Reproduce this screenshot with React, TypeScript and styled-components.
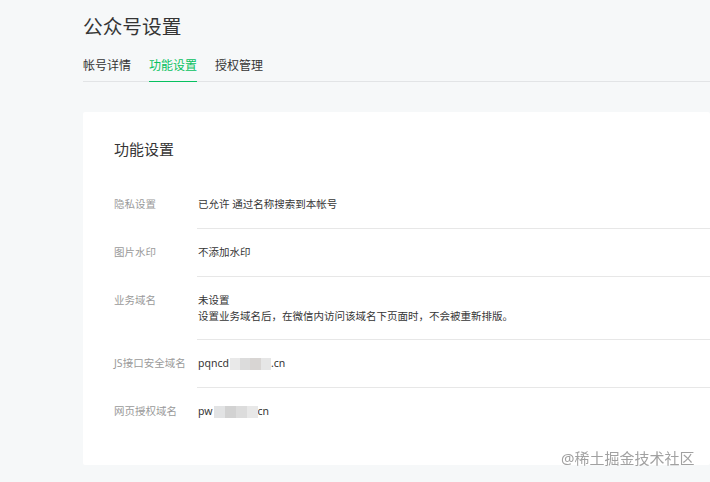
import * as React from 'react';
import styled, { createGlobalStyle } from 'styled-components';

const GlobalStyle = createGlobalStyle`
  html, body {
    margin: 0;
    padding: 0;
    background-color: #f6f8f9;
    font-family: "Noto Sans", "Noto Sans CJK SC", sans-serif;
    color: #353535;
  }
`;

const Page = styled.div`
  position: relative;
  width: 710px;
  height: 482px;
  overflow: hidden;
  padding: 13px 0 0 83px;
  box-sizing: border-box;
  background-color: #f6f8f9;
`;

const Heading = styled.h1`
  margin: 0;
  font-size: 19.7px;
  line-height: 27px;
  font-weight: 400;
`;

const Tabs = styled.div`
  display: flex;
  gap: 18px;
  margin-top: 10px;
  height: 32px;
  box-sizing: border-box;
  border-bottom: 1px solid #e2e4e6;
`;

const Tab = styled.div<{ $active?: boolean }>`
  font-size: 12px;
  line-height: 31px;
  height: 32px;
  box-sizing: border-box;
  color: ${(p) => (p.$active ? '#07c160' : '#353535')};
  border-bottom: 1px solid ${(p) => (p.$active ? '#07c160' : 'transparent')};
`;

const Card = styled.div`
  margin-top: 30px;
  height: 353px;
  padding: 26px 0 0 31px;
  box-sizing: border-box;
  background-color: #fff;
  border-radius: 2px;
`;

const CardTitle = styled.h2`
  margin: 0 0 21px;
  font-size: 15px;
  line-height: 22px;
  font-weight: 400;
`;

const Row = styled.div`
  display: flex;
  font-size: 10.5px;
  line-height: 16px;
`;

const RowLabel = styled.div`
  flex: none;
  width: 83px;
  padding-top: 15px;
  color: #9a9a9a;
  white-space: nowrap;
`;

const RowValue = styled.div<{ $last?: boolean; $tight?: boolean }>`
  flex: 1;
  padding: 15px 0 ${(p) => (p.$tight ? '15px' : '16px')} 1px;
  border-bottom: 1px solid ${(p) => (p.$last ? 'transparent' : '#e7e7e7')};
  white-space: nowrap;
`;

const Mosaic = styled.span<{ $width: number }>`
  display: inline-flex;
  vertical-align: -3px;
  width: ${(p) => p.$width}px;
  height: 12px;
  margin-left: 1px;
  filter: blur(0.4px);
`;

const MosaicBlock = styled.span<{ $color: string }>`
  flex: 1;
  background-color: ${(p) => p.$color};
`;

const Watermark = styled.div`
  position: absolute;
  left: 561px;
  top: 448px;
  font-size: 15px;
  line-height: 20px;
  color: rgba(130, 130, 130, 0.75);
  white-space: nowrap;
  filter: blur(0.3px);
`;

const BlurredPart = ({ width, shades }: { width: number; shades: string[] }) => (
  <Mosaic $width={width}>
    {shades.map((c, i) => (
      <MosaicBlock key={i} $color={c} />
    ))}
  </Mosaic>
);

export default function App() {
  return (
    <Page>
      <GlobalStyle />
      <Heading>公众号设置</Heading>
      <Tabs>
        <Tab>帐号详情</Tab>
        <Tab $active>功能设置</Tab>
        <Tab>授权管理</Tab>
      </Tabs>
      <Card>
        <CardTitle>功能设置</CardTitle>
        <Row>
          <RowLabel>隐私设置</RowLabel>
          <RowValue>已允许 通过名称搜索到本帐号</RowValue>
        </Row>
        <Row>
          <RowLabel>图片水印</RowLabel>
          <RowValue>不添加水印</RowValue>
        </Row>
        <Row>
          <RowLabel>业务域名</RowLabel>
          <RowValue $tight>
            未设置
            <br />
            设置业务域名后，在微信内访问该域名下页面时，不会被重新排版。
          </RowValue>
        </Row>
        <Row>
          <RowLabel>JS接口安全域名</RowLabel>
          <RowValue>
            pqncd
            <BlurredPart width={41} shades={['#e9e9e9', '#dcdcdc', '#d8d5d3', '#e6e6e6']} />
            .cn
          </RowValue>
        </Row>
        <Row>
          <RowLabel>网页授权域名</RowLabel>
          <RowValue $last>
            pw
            <BlurredPart width={44} shades={['#e2e3e4', '#d2d2d2', '#dcdcdc', '#e8e8e8']} />
            cn
          </RowValue>
        </Row>
      </Card>
      <Watermark>@稀土掘金技术社区</Watermark>
    </Page>
  );
}
